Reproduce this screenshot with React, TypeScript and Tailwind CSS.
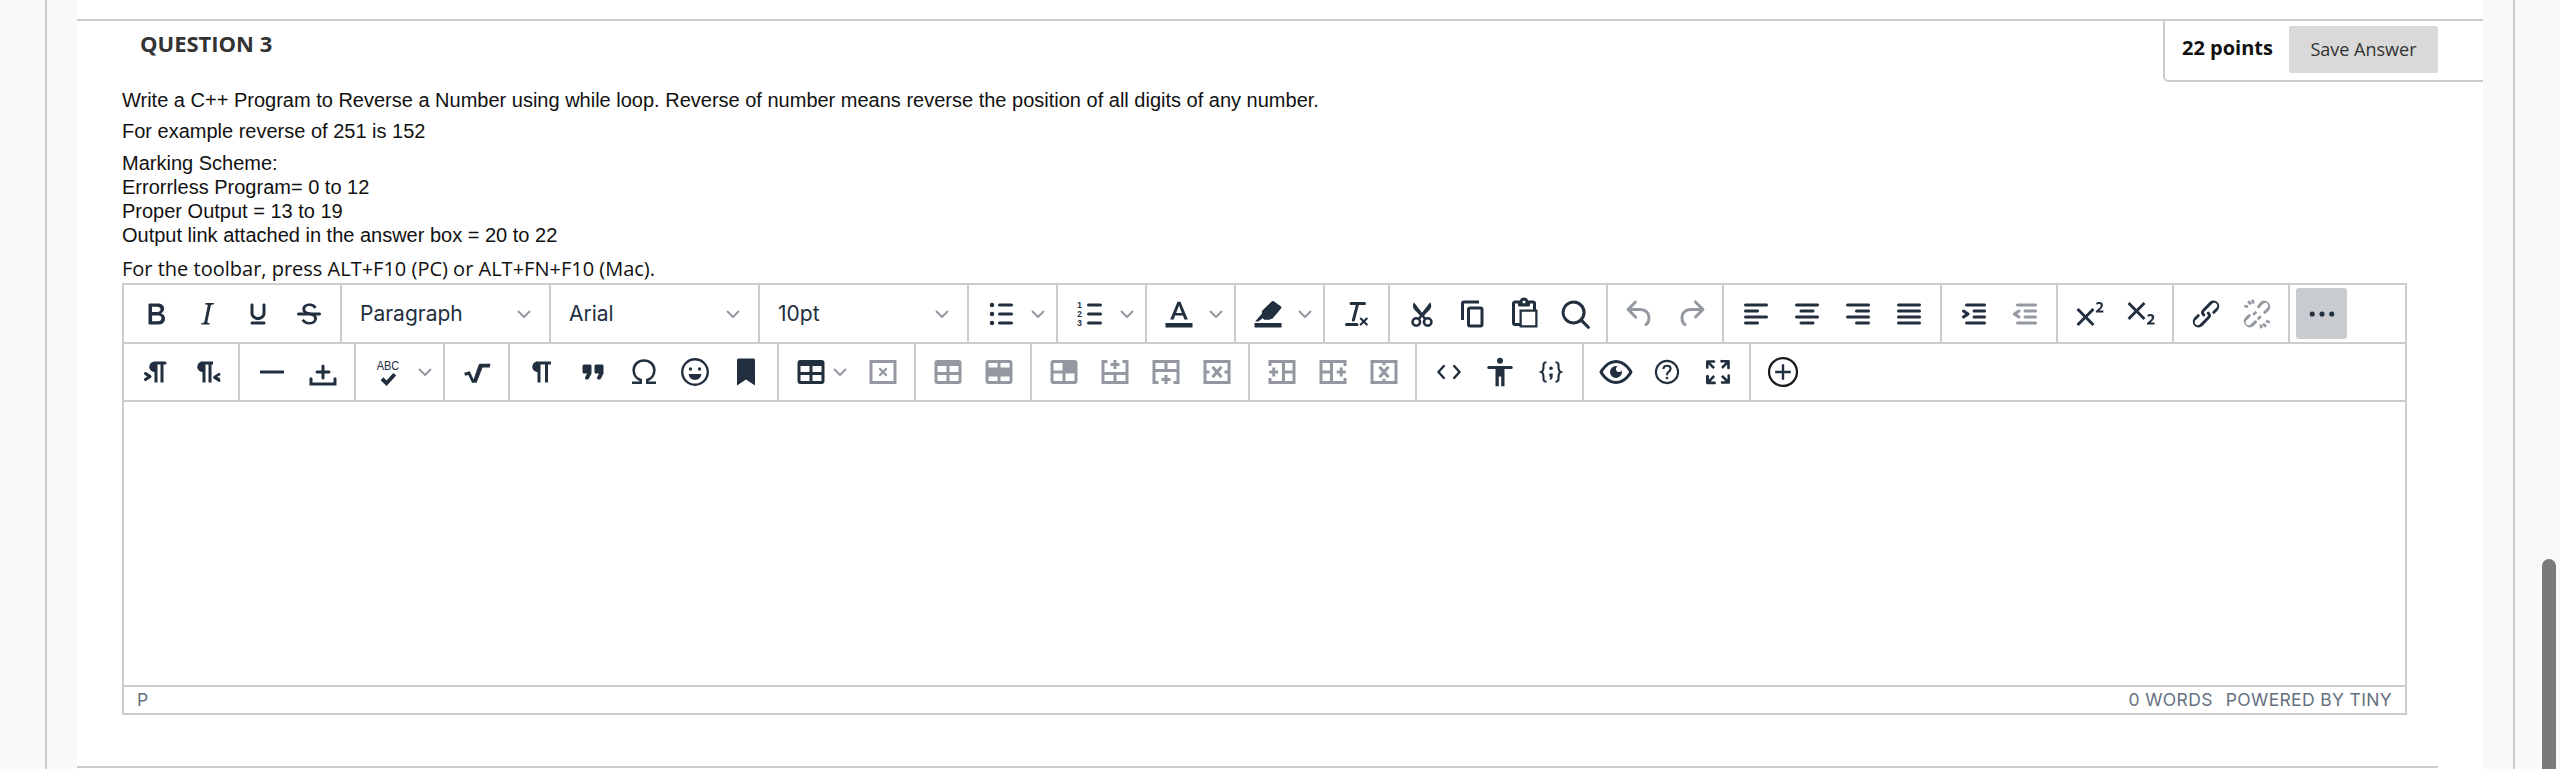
import React from "react";

const P = ({ d }: { d: string }) => <path d={d} fillRule="evenodd" />;
const S = ({ d, w = 2 }: { d: string; w?: number }) => (
  <path d={d} fill="none" stroke="currentColor" strokeWidth={w} />
);
const frame = "M5 4h14a2 2 0 0 1 2 2v12a2 2 0 0 1-2 2H5a2 2 0 0 1-2-2V6a2 2 0 0 1 2-2z";
const dots = "M4.5 6a1.5 1.5 0 1 0 3 0a1.5 1.5 0 1 0-3 0zM4.5 12a1.5 1.5 0 1 0 3 0a1.5 1.5 0 1 0-3 0zM4.5 18a1.5 1.5 0 1 0 3 0a1.5 1.5 0 1 0-3 0z";
const lines = "M11 5h8a1 1 0 0 1 0 2h-8a1 1 0 0 1 0-2zm0 6h8a1 1 0 0 1 0 2h-8a1 1 0 0 1 0-2zm0 6h8a1 1 0 0 1 0 2h-8a1 1 0 0 1 0-2z";

const icons: Record<string, React.ReactNode> = {
  bold: <P d="M7.8 19c-.3 0-.5 0-.6-.2l-.2-.5V5.7c0-.2 0-.4.2-.5l.6-.2h5c1.5 0 2.7.3 3.5 1 .7.6 1.1 1.4 1.1 2.5a3 3 0 01-.6 1.9c-.4.6-1 1-1.6 1.2.4.1.9.3 1.3.6s.8.7 1 1.2c.4.4.5 1 .5 1.6 0 1.3-.4 2.3-1.3 3-.8.7-2.1 1-3.8 1H7.8zm5-8.3c.6 0 1.2-.1 1.6-.5.4-.3.6-.7.6-1.3 0-1.1-.8-1.7-2.3-1.7H9.3v3.5h3.4zm.5 6c.7 0 1.3-.1 1.7-.4.4-.4.6-.9.6-1.5s-.2-1-.7-1.4c-.4-.3-1-.4-2-.4H9.4v3.8h4z" />,
  italic: <P d="M16.7 4.7l-.1.9h-.3c-.6 0-1 0-1.4.3-.3.3-.4.6-.5 1.1l-2.1 9.8v.6c0 .5.4.8 1.4.8h.2l-.2.8H8l.2-.8h.2c1.1 0 1.8-.5 2-1.5l2-9.8.1-.5c0-.6-.4-.8-1.4-.8h-.3l.2-.9h5.8z" />,
  underline: <P d="M16 5c.6 0 1 .4 1 1v5.5a4 4 0 01-.4 1.8l-1 1.4a5.3 5.3 0 01-5.5 1 5 5 0 01-1.6-1c-.5-.4-.8-.9-1.1-1.4a4 4 0 01-.4-1.8V6c0-.6.4-1 1-1s1 .4 1 1v5.5c0 .3 0 .6.2 1l.6.7a3.3 3.3 0 002.2.8 3.4 3.4 0 002.2-.8c.3-.2.4-.5.6-.8l.2-.9V6c0-.6.4-1 1-1zM8 17h8c.6 0 1 .4 1 1s-.4 1-1 1H8a1 1 0 010-2z" />,
  strike: <><P d="M15.6 8.5c-.5-.7-1-1.1-1.3-1.3-.6-.4-1.3-.6-2-.6-2.7 0-2.8 1.7-2.8 2.1 0 1.6 1.8 2 3.2 2.3 4.4.9 4.6 2.8 4.6 3.9 0 1.4-.7 4.1-5 4.1A6.2 6.2 0 017 16.4l1.5-1.1c.4.6 1.6 2 3.7 2 1.6 0 2.5-.4 3-1.2.4-.8.3-2-.8-2.6-.7-.4-1.6-.7-2.9-1-1-.2-3.9-.8-3.9-3.6C7.6 6 10.3 5 12.4 5c2.9 0 4.2 1.6 4.7 2.4l-1.5 1.1z" /><P d="M5 11h14a1 1 0 010 2H5a1 1 0 010-2z" /></>,
  ul: <P d={lines + dots} />,
  ol: <><P d={lines} /><text x="5" y="8" fontSize="5.500" textAnchor="middle" fontFamily="Liberation Sans" fontWeight="700">1</text><text x="5" y="14" fontSize="5.500" textAnchor="middle" fontFamily="Liberation Sans" fontWeight="700">2</text><text x="5" y="20" fontSize="5.500" textAnchor="middle" fontFamily="Liberation Sans" fontWeight="700">3</text></>,
  textcolor: <P d="M3 18h18v3H3zM15.600 15.700l-1-2.700H9.400l-1 2.700H6.100L11 3.800h2l4.900 11.900h-2.300zM12 6.400l-1.900 4.900h3.800L12 6.400z" />,
  highlight: <P d="M3 18h18v3H3zM15.800 3.500l4.700 3.400a1 1 0 0 1 .2 1.400l-5.500 6.600c-.3.4-.8.5-1.200.3l-.8.7H9.500l-1-1-3 2.100H3.400l3.600-4.200 1-1.200-.1-1c0-.3 0-.6.2-.8l6.300-6.100c.4-.4 1-.5 1.400-.2z" />,
  clear: <P d="M13.200 6a1 1 0 0 1 0 .2l-2.600 10a1 1 0 0 1-1 .8h-.2a.8.8 0 0 1-.8-1l2.600-10H8a1 1 0 1 1 0-2h9a1 1 0 0 1 0 2h-3.800zM5 18h7a1 1 0 0 1 0 2H5a1 1 0 0 1 0-2zm13 1.500L16.500 18 15 19.500a.7.7 0 0 1-1-1l1.500-1.500-1.500-1.500a.7.7 0 0 1 1-1l1.500 1.500 1.500-1.500a.7.7 0 0 1 1 1L17.500 17l1.500 1.500a.7.7 0 0 1-1 1z" />,
  cut: <><circle cx="8.200" cy="17.300" r="2.500" fill="none" stroke="currentColor" strokeWidth="1.700" /><circle cx="15.800" cy="17.300" r="2.500" fill="none" stroke="currentColor" strokeWidth="1.700" /><P d="M6.600 4.200l5.400 6.900 5.400-6.900c1 1.600 1 3.200 0 4.600L13.400 13l1.600 2.300-1.300 1-1.700-2.400-1.700 2.400-1.300-1 1.600-2.300-3.900-4.200c-1-1.400-1-3 0-4.600z" /></>,
  copy: <P d="M16 3H6a2 2 0 00-2 2v11h2V5h10V3zm1 4a2 2 0 012 2v10a2 2 0 01-2 2h-7a2 2 0 01-2-2V9c0-1.200.9-2 2-2h7zm0 12V9h-7v10h7z" />,
  paste: <P d="M18 9V5h-2v1c0 .6-.4 1-1 1H9a1 1 0 01-1-1V5H6v13h3V9h9zM9 20H6a2 2 0 01-2-2V5c0-1.100.9-2 2-2h3.200A3 3 0 0112 1a3 3 0 012.800 2H18a2 2 0 012 2v4h1v12H9v-1zm1.500-9.500v9h9v-9h-9zM12 3a1 1 0 00-1 1c0 .5.4 1 1 1s1-.5 1-1-.4-1-1-1z" />,
  search: <P d="M16 17.300a8 8 0 111.400-1.400l4.300 4.400a1 1 0 01-1.400 1.400l-4.400-4.300zm-5-.3a6 6 0 100-12 6 6 0 000 12z" />,
  undo: <P d="M6.400 8H12c3.700 0 6.200 2 6.800 5.100.6 2.700-.4 5.600-2.300 6.800a1 1 0 01-1-1.800c1.100-.6 1.800-2.700 1.400-4.600-.5-2.100-2.100-3.500-4.900-3.500H6.400l3.300 3.300a1 1 0 11-1.400 1.400l-5-5a1 1 0 010-1.400l5-5a1 1 0 011.400 1.400L6.400 8z" />,
  redo: <P d="M17.600 10H12c-2.800 0-4.400 1.400-4.900 3.500-.4 2 .3 4 1.400 4.600a1 1 0 11-1 1.800c-2-1.200-2.900-4.100-2.300-6.800.6-3 3-5.100 6.800-5.100h5.600l-3.300-3.300a1 1 0 111.400-1.400l5 5a1 1 0 010 1.400l-5 5a1 1 0 01-1.400-1.400l3.300-3.300z" />,
  alignL: <P d="M5 5h14c.6 0 1 .4 1 1s-.4 1-1 1H5a1 1 0 110-2zm0 4h8c.6 0 1 .4 1 1s-.4 1-1 1H5a1 1 0 110-2zm0 8h8c.6 0 1 .4 1 1s-.4 1-1 1H5a1 1 0 010-2zm0-4h14c.6 0 1 .4 1 1s-.4 1-1 1H5a1 1 0 010-2z" />,
  alignC: <P d="M5 5h14c.6 0 1 .4 1 1s-.4 1-1 1H5a1 1 0 110-2zm3 4h8c.6 0 1 .4 1 1s-.4 1-1 1H8a1 1 0 110-2zm0 8h8c.6 0 1 .4 1 1s-.4 1-1 1H8a1 1 0 010-2zm-3-4h14c.6 0 1 .4 1 1s-.4 1-1 1H5a1 1 0 010-2z" />,
  alignR: <P d="M5 5h14c.6 0 1 .4 1 1s-.4 1-1 1H5a1 1 0 110-2zm6 4h8c.6 0 1 .4 1 1s-.4 1-1 1h-8a1 1 0 010-2zm0 8h8c.6 0 1 .4 1 1s-.4 1-1 1h-8a1 1 0 010-2zm-6-4h14c.6 0 1 .4 1 1s-.4 1-1 1H5a1 1 0 010-2z" />,
  alignJ: <P d="M5 5h14c.6 0 1 .4 1 1s-.4 1-1 1H5a1 1 0 110-2zm0 4h14c.6 0 1 .4 1 1s-.4 1-1 1H5a1 1 0 110-2zm0 4h14c.6 0 1 .4 1 1s-.4 1-1 1H5a1 1 0 010-2zm0 4h14c.6 0 1 .4 1 1s-.4 1-1 1H5a1 1 0 010-2z" />,
  indent: <P d="M7 5h12c.6 0 1 .4 1 1s-.4 1-1 1H7a1 1 0 110-2zm5 4h7c.6 0 1 .4 1 1s-.4 1-1 1h-7a1 1 0 010-2zm0 4h7c.6 0 1 .4 1 1s-.4 1-1 1h-7a1 1 0 010-2zm-5 4h12a1 1 0 010 2H7a1 1 0 010-2zm-2.600-3.800L6.200 12l-1.800-1.200a1 1 0 011.200-1.600l3 2a1 1 0 010 1.600l-3 2a1 1 0 11-1.200-1.600z" />,
  outdent: <P d="M7 5h12c.6 0 1 .4 1 1s-.4 1-1 1H7a1 1 0 110-2zm5 4h7c.6 0 1 .4 1 1s-.4 1-1 1h-7a1 1 0 010-2zm0 4h7c.6 0 1 .4 1 1s-.4 1-1 1h-7a1 1 0 010-2zm-5 4h12a1 1 0 010 2H7a1 1 0 010-2zm1.600-3.800a1 1 0 01-1.200 1.600l-3-2a1 1 0 010-1.600l3-2a1 1 0 011.200 1.600L6.800 12l1.800 1.200z" />,
  sup: <P d="M15 9.400L10.400 14l4.600 4.600-1.400 1.400L9 15.400 4.400 20 3 18.600 7.600 14 3 9.400 4.400 8 9 12.600 13.600 8 15 9.400zm5.900 1.600h-5v-1l1-.8 1.700-1.600c.3-.5.5-.9.5-1.300 0-.3 0-.5-.2-.7-.2-.2-.5-.3-.9-.3l-.8.2-.7.4-.4-1.200c.2-.2.5-.4.9-.5.4-.2.9-.2 1.300-.2.7 0 1.300.2 1.700.5.4.4.6.9.6 1.500s-.2 1.100-.5 1.600a8 8 0 0 1-1.400 1.500l-.6.5h2.800V11z" />,
  sub: <P d="M10.400 10l4.600 4.600-1.400 1.400L9 11.400 4.400 16 3 14.600 7.600 10 3 5.400 4.400 4 9 8.600 13.600 4 15 5.400 10.400 10zM21 19h-5v-1l1-.8 1.700-1.600c.3-.4.5-.8.5-1.200l-.2-.7c-.2-.2-.5-.3-.9-.3a2 2 0 00-.8.2l-.7.3-.4-1.100 1-.6 1.200-.2c.8 0 1.400.2 1.800.6.4.3.6.8.6 1.400s-.2 1.100-.5 1.600a8 8 0 01-1.400 1.500l-.6.5H21V19z" />,
  link: <P d="M6.200 12.300a1 1 0 0 1 1.400 1.400l-2 2a2 2 0 1 0 2.600 2.800l4.800-4.800a1 1 0 0 0 0-1.400 1 1 0 1 1 1.400-1.300 2.900 2.900 0 0 1 0 4L9.600 20a3.900 3.900 0 0 1-5.500-5.500l2-2zm11.600-.6a1 1 0 0 1-1.400-1.400l2-2a2 2 0 1 0-2.600-2.800L11 10.300a1 1 0 0 0 0 1.400A1 1 0 1 1 9.600 13a2.900 2.900 0 0 1 0-4L14.400 4a3.900 3.900 0 0 1 5.500 5.500l-2 2z" />,
  unlink: <><P d="M6.200 12.300a1 1 0 0 1 1.400 1.400l-2.100 2.100a2 2 0 1 0 2.700 2.700l2.200-2.100a1 1 0 0 1 1.400 1.400L9.700 20a4 4 0 0 1-5.600-5.600l2.100-2.100zm11.600-.6a1 1 0 0 1-1.400-1.400l2.100-2a2 2 0 1 0-2.700-2.800L13.600 8a1 1 0 0 1-1.400-1.400L14.300 4a4 4 0 0 1 5.600 5.600l-2.100 2.100z" /><S d="M6 3.500l2 2M3.500 6.500l2.500.8M9 2.500l.6 2.500M18 20.500l-2-2M20.500 17.500l-2.500-.8M15 21.500l-.6-2.500M9.500 12.500l2-2M12.500 15.500l2-2" w={1.800} /></>,
  more: <P d="M5.500 10.300a1.700 1.700 0 1 0 0 3.400 1.700 1.700 0 0 0 0-3.400zm6.500 0a1.700 1.700 0 1 0 0 3.400 1.700 1.700 0 0 0 0-3.400zm6.500 0a1.700 1.700 0 1 0 0 3.400 1.700 1.700 0 0 0 0-3.400z" />,
  ltr: <P d="M11 5h7a1 1 0 0 1 0 2h-1v12h-2V7h-2v12h-2v-7c-.5 0-1 0-1.400-.3A3.400 3.400 0 0 1 7.800 10a3.300 3.300 0 0 1 0-2.800A3.400 3.400 0 0 1 9.600 5.400L11 5zM4.400 16.200L6.200 15l-1.800-1.200a1 1 0 0 1 1.200-1.600l3 2a1 1 0 0 1 0 1.600l-3 2a1 1 0 1 1-1.200-1.600z" />,
  rtl: <P d="M8 5h8v2h-1v12h-2V7h-2v12H9v-7c-.5 0-1 0-1.400-.3A3.400 3.400 0 0 1 5.800 10a3.300 3.300 0 0 1 0-2.800A3.400 3.400 0 0 1 7.600 5.400L8 5zm12.600 11.800a1 1 0 0 1-1.200 1.600l-3-2a1 1 0 0 1 0-1.600l3-2a1 1 0 0 1 1.200 1.600L18.800 15l1.800 1.200z" />,
  hr: <P d="M4 11h16v2H4z" />,
  insert: <P d="M11 11H8a1 1 0 1 0 0 2h3v3a1 1 0 0 0 2 0v-3h3a1 1 0 0 0 0-2h-3V8a1 1 0 0 0-2 0v3zM20 15.500a1 1 0 0 1 1 1V21H3v-4.500a1 1 0 0 1 2 0V19h14v-2.500a1 1 0 0 1 1-1z" />,
  spell: <><text x="12" y="10.600" textAnchor="middle" fontSize="8.500" fontFamily="Liberation Sans" textLength="15" lengthAdjust="spacingAndGlyphs">ABC</text><S d="M8 16.500l3 3 5.500-6" w={2.600} /></>,
  math: <P d="M3.500 12.500l3.700-1 2.500 5.500L13 7.500c.2-.6.700-1 1.300-1H21l-.5 2.500h-4.800l-4 10.200H8.700L6.200 14l-2.200.5z" />,
  para: <P d="M9 19v-7c-.5 0-1 0-1.400-.3A3.400 3.400 0 0 1 5.800 10a3.300 3.300 0 0 1 0-2.800A3.400 3.400 0 0 1 7.600 5.400C8 5 8.500 5 9 5h9v2h-2v12h-2V7h-3v12H9z" />,
  quote: <P d="M7.500 17h.9c.4 0 .7-.2.9-.6L11 13V8c0-.6-.4-1-1-1H6a1 1 0 0 0-1 1v4c0 .6.4 1 1 1h2l-1.300 2.700a1 1 0 0 0 .8 1.300zm8 0h.9c.4 0 .7-.2.9-.6L19 13V8c0-.6-.4-1-1-1h-4a1 1 0 0 0-1 1v4c0 .6.4 1 1 1h2l-1.300 2.700a1 1 0 0 0 .8 1.300z" />,
  omega: <S d="M4 19.200h5.800v-1.900c-2.700-.8-4.700-3.300-4.700-6.400C5.100 7 8.100 4.300 12 4.300s6.900 2.700 6.900 6.600c0 3.100-2 5.600-4.700 6.400v1.900H20" w={1.700} />,
  emoji: <><circle cx="12" cy="12" r="8.500" fill="none" stroke="currentColor" strokeWidth="1.600" /><circle cx="9" cy="10" r="1.100" /><circle cx="15" cy="10" r="1.100" /><P d="M7.800 13.400h8.400c0 2.300-1.900 3.900-4.200 3.900s-4.200-1.600-4.200-3.900z" /></>,
  bookmark: <P d="M6 4v17l6-4 6 4V4c0-.6-.4-1-1-1H7a1 1 0 0 0-1 1z" />,
  table: <P d={frame + "M5 14h6v4H5zM13 14h6v4h-6zM13 8h6v4h-6zM5 8h6v4H5z"} />,
  tableDel: <><S d="M4 5h16v14H4z" /><S d="M9.500 9.500l5 5M14.500 9.500l-5 5" w={1.500} /></>,
  tableRow: <P d={frame + "M5 6h6v3H5zM13 6h6v3h-6zM5 15h6v3H5zM13 15h6v3h-6z"} />,
  tableCell: <P d={frame + "M5 6h6v5H5zM5 13h6v5H5zM13 13h6v5h-6z"} />,
  rowBefore: <S d="M7 5H4v14h16V5h-3M4 13h16M12 13v6M12 4v6M9 7h6" />,
  rowAfter: <S d="M7 19H4V5h16v14h-3M4 11h16M12 5v6M12 14v6M9 17h6" />,
  rowDel: <S d="M4 5h16v14H4zM9 8.500l6 7M15 8.500l-6 7M4 12h3M17 12h3" />,
  colBefore: <S d="M4 8V5h16v14H4v-3M13 5v14M13 12h7M3.500 12h6M6.500 9v6" />,
  colAfter: <S d="M20 8V5H4v14h16v-3M11 5v14M4 12h7M14.500 12h6M17.500 9v6" />,
  colDel: <S d="M4 5h16v14H4zM9 8.500l6 7M15 8.500l-6 7M12 5v2.500M12 16.500V19" />,
  code: <S d="M9 7.500L5 12l4 4.500M15 7.500l4 4.500-4 4.500" w={1.600} />,
  a11y: <P d="M12 2.500a2 2 0 1 1 0 4 2 2 0 0 1 0-4zM4.500 8h15a1 1 0 0 1 0 2H15v11.500h-2.200V15h-1.600v6.500H9V10H4.500a1 1 0 0 1 0-2z" />,
  template: <><S d="M9 5.500c-2.300 0-2 1.500-2 3s0 2.900-1.500 3.500c1.500.6 1.500 2 1.500 3.500s-.3 3 2 3M15 5.500c2.300 0 2 1.500 2 3s0 2.900 1.500 3.500c-1.500.6-1.500 2-1.500 3.500s.3 3-2 3" w={1.400} /><circle cx="12" cy="9.500" r="1.200" /><P d="M10.900 13h2.200v1.800c0 1.100-.5 2-1.400 2.500l-.7-.6c.4-.4.6-.9.6-1.500h-.7z" /></>,
  eye: <P d="M3.500 12.500c.5.8 1.100 1.600 1.800 2.300 2 2 4.200 3.200 6.700 3.200s4.700-1.200 6.700-3.200a16.200 16.200 0 0 0 2.100-2.800 15.700 15.700 0 0 0-2.100-2.800c-2-2-4.200-3.200-6.700-3.200a9.300 9.300 0 0 0-6.700 3.200A16.200 16.200 0 0 0 3.200 12c0 .2.2.3.3.5zm-2.400-1l.7-1.200L4 7.800C6.200 5.400 8.900 4 12 4c3 0 5.800 1.400 8.100 3.800a18.200 18.200 0 0 1 2.800 3.700v1l-.7 1.200-2.100 2.500c-2.300 2.400-5 3.800-8.100 3.800-3 0-5.800-1.400-8.100-3.800a18.200 18.200 0 0 1-2.800-3.700 1 1 0 0 1 0-1zm12-3.300a2 2 0 1 0 2.700 2.600 4 4 0 1 1-2.600-2.600z" />,
  help: <><circle cx="12" cy="12" r="7.400" fill="none" stroke="currentColor" strokeWidth="1.400" /><S d="M9.600 10c.1-1.400 1.100-2.200 2.400-2.200 1.400 0 2.400.9 2.400 2.100 0 1-.6 1.500-1.300 2-.7.5-1.100.9-1.100 1.800v.4" w={1.400} /><circle cx="12" cy="16" r=".9" /></>,
  full: <P d="M15.300 10l-1.200-1.300 2.900-3h-2.300a.9.9 0 1 1 0-1.700H19c.5 0 .9.4.9.9v4.400a.9.9 0 1 1-1.800 0V7l-2.900 3zm0 4l3 3v-2.300a.9.9 0 1 1 1.700 0V19c0 .5-.4.9-.9.9h-4.400a.9.9 0 1 1 0-1.800H17l-3-2.900 1.300-1.200zM10 15.400l-2.900 3h2.300a.9.9 0 1 1 0 1.700H5a.9.9 0 0 1-1-.9v-4.400a.9.9 0 1 1 2 0V17l2.900-3 1.200 1.300zM8.700 10L5.700 7v2.300a.9.9 0 0 1-1.700 0V5c0-.5.4-.9.9-.9h4.400a.9.9 0 0 1 0 1.800H7l3 2.900-1.300 1.200z" />,
  plus: <><circle cx="12" cy="12" r="9.300" fill="none" stroke="#1b1b1b" strokeWidth="1.500" /><S d="M12 6.800v10.400M6.800 12h10.400" w={1.600} /></>,
};

const Icon = ({ name, off }: { name: string; off?: boolean }) => (
  <svg viewBox="0 0 24 24" className={`w-[36px] h-[36px] ${off ? "text-[#9499a1]" : "text-[#222f3e]"}`} fill="currentColor">
    {icons[name]}
  </svg>
);
const Chev = () => (
  <svg viewBox="0 0 14 8" className="w-[14px] h-[8px] shrink-0 text-[#9499a1]" fill="none" stroke="currentColor" strokeWidth="2">
    <path d="M1 1l6 6 6-6" />
  </svg>
);
const Btn = ({ name, off, active }: { name: string; off?: boolean; active?: boolean }) => (
  <div className={`w-[51px] h-[51px] flex items-center justify-center rounded-[3px] ${active ? "bg-[#c8cbcf]" : ""}`}>
    <Icon name={name} off={off} />
  </div>
);
const Split = ({ name, narrow }: { name: string; narrow?: boolean }) => (
  <div className={`${narrow ? "w-[72px]" : "w-[75px]"} h-[51px] flex items-center`}>
    <div className="w-[51px] shrink-0 flex justify-center"><Icon name={name} /></div>
    <div className={narrow ? "-ml-[3px]" : "ml-[5px]"}><Chev /></div>
  </div>
);
const Group = ({ children, last }: { children: React.ReactNode; last?: boolean }) => (
  <div className={`flex items-center px-[6px] ${last ? "" : "border-r-2 border-[#cccccc]"}`}>{children}</div>
);
const Select = ({ label }: { label: string }) => (
  <div className="w-[209px] h-full flex items-center justify-between pl-[18px] pr-[18px] border-r-2 border-[#cccccc] text-[21px] text-[#222f3e]">
    <span>{label}</span>
    <Chev />
  </div>
);
const B = (names: string) =>
  names.split(" ").map((n) => {
    const off = n.endsWith("!");
    const name = off ? n.slice(0, -1) : n;
    return <Btn key={name} name={name} off={off} />;
  });

export default function App() {
  return (
    <div className="relative w-[2560px] h-[769px] overflow-hidden bg-[#f9f9f9] pl-[45px] font-['Liberation_Sans',sans-serif]">
      <div className="flex h-full w-[2470px] border-x-2 border-[#cccccc]">
        <div className="ml-[30px] w-[2406px] h-full bg-white">
          <div className="h-[19px]" />
          <div className="border-t-2 border-[#cccccc] flex justify-between h-[62px] font-['Open_Sans',sans-serif]">
            <h2 className="pl-[63px] pt-[7px] text-[22px] leading-[30px] font-bold text-[#333333]">QUESTION 3</h2>
            <div className="w-[320px] h-[61px] border-l-2 border-b-2 border-[#cccccc] rounded-bl-[6px] flex items-center pl-[17px] pb-[3px]">
              <span className="w-[107px] text-[20px] font-bold text-[#111111] -translate-y-[1px]">22 points</span>
              <button className="w-[149px] h-[47px] rounded-[2px] bg-[#d9d9d9] text-[18px] text-[#333333]">Save Answer</button>
            </div>
          </div>
          <div className="pl-[45px] mr-[45px] h-[687px] border-b-2 border-[#cccccc]">
            <div className="text-[20px] leading-[24px] text-[#111111] pt-[7px]">
              <p>Write a C++ Program to Reverse a Number using while loop. Reverse of number means reverse the position of all digits of any number.</p>
              <p className="mt-[7px]">For example reverse of 251 is 152</p>
              <p className="mt-[8px]">Marking Scheme:<br />Errorrless Program= 0 to 12<br />Proper Output = 13 to 19<br />Output link attached in the answer box = 20 to 22</p>
            </div>
            <p className="mt-[9px] h-[27px] font-['Open_Sans',sans-serif] text-[20px] leading-[26px] text-[#111111]">For the toolbar, press ALT+F10 (PC) or ALT+FN+F10 (Mac).</p>
            <div className="w-[2285px] h-[432px] border-2 border-[#cccccc] flex flex-col font-['Inter',sans-serif]">
              <div className="flex h-[59px] border-b-2 border-[#cccccc]">
                <Group>{B("bold italic underline strike")}</Group>
                <Select label="Paragraph" />
                <Select label="Arial" />
                <Select label="10pt" />
                <Group><Split name="ul" /></Group>
                <Group><Split name="ol" /></Group>
                <Group><Split name="textcolor" /></Group>
                <Group><Split name="highlight" /></Group>
                <Group>{B("clear")}</Group>
                <Group>{B("cut copy paste search")}</Group>
                <Group>{B("undo! redo!")}</Group>
                <Group>{B("alignL alignC alignR alignJ")}</Group>
                <Group>{B("indent outdent!")}</Group>
                <Group>{B("sup sub")}</Group>
                <Group>{B("link unlink!")}</Group>
                <Group last><Btn name="more" active /></Group>
              </div>
              <div className="flex h-[58px] border-b-2 border-[#cccccc]">
                <Group>{B("ltr rtl")}</Group>
                <Group>{B("hr insert")}</Group>
                <Group><Split name="spell" /></Group>
                <Group>{B("math")}</Group>
                <Group>{B("para quote omega emoji bookmark")}</Group>
                <Group><Split name="table" narrow />{B("tableDel!")}</Group>
                <Group>{B("table! tableRow!")}</Group>
                <Group>{B("tableCell! rowBefore! rowAfter! rowDel!")}</Group>
                <Group>{B("colBefore! colAfter! colDel!")}</Group>
                <Group>{B("code a11y template")}</Group>
                <Group>{B("eye help full")}</Group>
                <Group last>{B("plus")}</Group>
              </div>
              <div className="flex-1" />
              <div className="h-[28px] border-t-2 border-[#cccccc] flex items-center justify-between pl-[13px] pr-[13px] text-[17.5px] text-[#657181]">
                <span>P</span>
                <span className="tracking-[0.35px] flex gap-[13px]"><span>0 WORDS</span><span>POWERED BY TINY</span></span>
              </div>
            </div>
          </div>
        </div>
      </div>
      <div className="absolute right-[4px] bottom-0 w-[14px] h-[210px] bg-[#7a7a7a] rounded-t-[7px]" />
    </div>
  );
}
